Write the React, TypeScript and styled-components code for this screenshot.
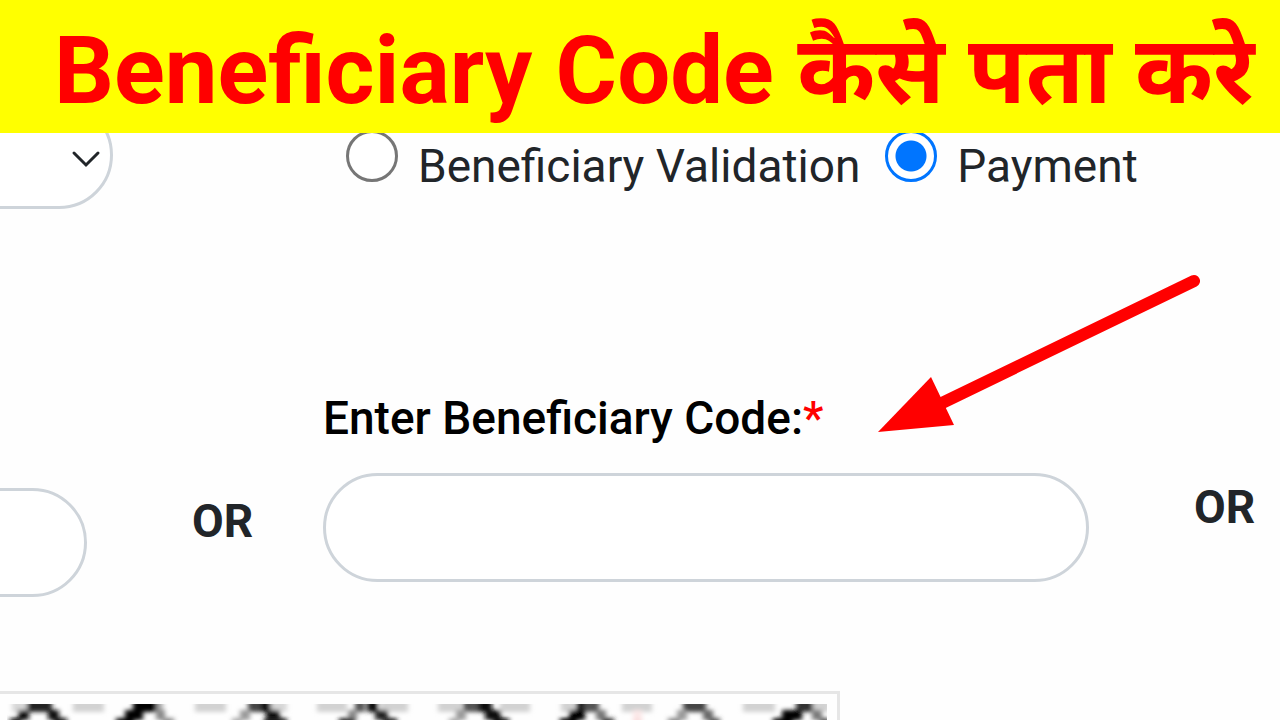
import React from 'react';
import styled, { createGlobalStyle } from 'styled-components';

const GlobalStyle = createGlobalStyle`
  *, *::before, *::after { box-sizing: border-box; }
  body {
    margin: 0;
    background: #fefefe;
    color: #212529;
    font-family: Roboto, "Noto Sans", "Noto Sans Devanagari", sans-serif;
    font-size: 46px;
    line-height: 56px;
  }
`;

const Page = styled.div`
  position: relative;
  display: flex;
  flex-direction: column;
  height: 100vh;
  overflow: hidden;
`;

const Banner = styled.header`
  position: relative;
  z-index: 1;
  flex: none;
  padding: 15px 20px 6px 54px;
  background: #ffff00;
`;

const Title = styled.h1`
  margin: 0;
  color: #ff0000;
  font-size: 94px;
  font-weight: 700;
  line-height: 112px;
  white-space: nowrap;
`;

const Form = styled.form`
  flex: none;
  margin-top: -32px;
`;

const ModeRow = styled.div`
  display: flex;
  align-items: flex-start;
`;

const SelectWrap = styled.div`
  position: relative;
  flex: none;
  width: 193px;
  margin-left: -80px;
`;

const Select = styled.select`
  appearance: none;
  display: block;
  width: 100%;
  height: 108px;
  border: 3px solid #ced4da;
  border-radius: 54px;
  background: #ffffff;
  font: inherit;
`;

const Chevron = styled.svg`
  position: absolute;
  right: 12px;
  top: 49px;
  width: 30px;
  height: 18px;
  pointer-events: none;
`;

const Modes = styled.div`
  display: flex;
  gap: 25px;
  margin: 29px 0 0 233px;
`;

const ModeLabel = styled.label`
  display: flex;
  gap: 20px;
  white-space: nowrap;
  line-height: 72px;
`;

const Radio = styled.input`
  appearance: none;
  flex: none;
  width: 52px;
  height: 52px;
  margin: 0;
  border: 3px solid #767676;
  border-radius: 50%;
  background: #ffffff;
  &:checked {
    border-color: #0075ff;
    background: radial-gradient(circle, #0075ff 15px, #ffffff 16px);
  }
`;

const CodeRow = styled.div`
  display: flex;
  align-items: flex-end;
  margin-top: 181px;
`;

const TextInput = styled.input`
  display: block;
  width: 100%;
  height: 109px;
  padding: 0 40px;
  border: 3px solid #ced4da;
  border-radius: 55px;
  background: #ffffff;
  font: inherit;
`;

const SideField = styled.div`
  flex: none;
  width: 187px;
  margin: 0 105px 0 -100px;
`;

const Or = styled.strong<{ $lift: number }>`
  flex: none;
  width: 60px;
  margin-bottom: ${({ $lift }) => $lift}px;
  font-weight: 700;
`;

const CodeField = styled.div`
  flex: 1;
  margin: 0 105px 15px 71px;
`;

const CodeLabel = styled.label`
  display: block;
  margin-bottom: 27px;
  color: #000000;
  font-weight: 500;
  white-space: nowrap;
`;

const Required = styled.span`
  color: #ff0000;
`;

const EdgeSpace = styled.div`
  flex: none;
  width: 26px;
`;

const Captcha = styled.div`
  width: 860px;
  margin: 94px 0 0 -20px;
  padding: 10px;
  border: 3px solid #e6e6e6;
`;

const CaptchaImage = styled.svg`
  display: block;
  width: 820px;
  height: 60px;
  margin-left: 14px;
`;

const Arrow = styled.svg`
  position: absolute;
  left: 878px;
  top: 274px;
  width: 322px;
  height: 160px;
`;

// Strokes of the captcha by pixel row: [x start, x end, colour]
const captchaRows: [number, number, string][][] = [
  [
    [12, 27, '#d8d8d8'], [27, 52, '#222'], [73, 104, '#d2d2d2'],
    [133, 157, '#050505'], [157, 163, '#aaa'], [195, 226, '#d2d2d2'],
    [248, 261, '#444'], [261, 271, '#111'], [271, 287, '#d8d8d8'],
    [317, 347, '#d2d2d2'], [355, 365, '#555'], [367, 378, '#111'], [380, 408, '#d2d2d2'],
    [438, 462, '#d2d2d2'], [463, 478, '#555'], [478, 492, '#111'], [500, 530, '#d2d2d2'],
    [561, 575, '#d2d2d2'], [576, 585, '#222'], [585, 599, '#555'], [622, 652, '#d2d2d2'],
    [683, 706, '#444'], [743, 775, '#d2d2d2'], [796, 813, '#333'], [813, 830, '#d2d2d2'],
  ],
  [
    [18, 29, '#111'], [48, 59, '#111'], [125, 143, '#050505'], [156, 165, '#888'],
    [240, 250, '#999'], [266, 280, '#111'], [348, 357, '#888'], [375, 388, '#222'],
    [456, 466, '#999'], [485, 501, '#111'], [569, 585, '#050505'], [596, 606, '#777'],
    [633, 642, '#fbe8e8'], [677, 687, '#999'], [703, 713, '#666'],
    [782, 802, '#050505'], [812, 822, '#777'],
  ],
  [
    [10, 21, '#111'], [54, 67, '#111'], [116, 134, '#050505'], [163, 174, '#888'],
    [232, 242, '#aaa'], [264, 287, '#222'], [339, 355, '#222'], [383, 397, '#222'],
    [449, 459, '#aaa'], [493, 509, '#111'], [560, 577, '#050505'], [602, 614, '#333'],
    [633, 642, '#fadede'], [668, 680, '#888'], [709, 720, '#555'],
    [773, 793, '#050505'], [820, 830, '#555'],
  ],
];

export default function App() {
  return (
    <Page>
      <GlobalStyle />
      <Banner>
        <Title>Beneficiary Code कैसे पता करे</Title>
      </Banner>
      <Form>
        <ModeRow>
          <SelectWrap>
            <Select aria-label="Category" />
            <Chevron viewBox="0 0 30 18" aria-hidden="true">
              <path d="M3 3 15 15 27 3" fill="none" stroke="#212529" strokeWidth="3" strokeLinecap="round" strokeLinejoin="miter" />
            </Chevron>
          </SelectWrap>
          <Modes>
            <ModeLabel><Radio type="radio" name="mode" />Beneficiary Validation</ModeLabel>
            <ModeLabel><Radio type="radio" name="mode" defaultChecked />Payment</ModeLabel>
          </Modes>
        </ModeRow>
        <CodeRow>
          <SideField><TextInput type="text" aria-label="Application number" /></SideField>
          <Or $lift={48}>OR</Or>
          <CodeField>
            <CodeLabel htmlFor="code">Enter Beneficiary Code:<Required>*</Required></CodeLabel>
            <TextInput id="code" type="text" />
          </CodeField>
          <Or $lift={62}>OR</Or>
          <EdgeSpace />
        </CodeRow>
        <Captcha>
          <CaptchaImage viewBox="7 0 820 60" role="img" aria-label="Captcha">
            <defs>
              <filter id="soften" x="-5%" y="-50%" width="110%" height="200%">
                <feGaussianBlur stdDeviation="2.5 2" />
              </filter>
            </defs>
            <g filter="url(#soften)">
              {captchaRows.map((row, r) =>
                row.map(([from, to, fill]) => (
                  <rect
                    key={`${r}-${from}`}
                    x={from}
                    y={r === 0 ? -4 : r * 8 - 2}
                    width={to - from}
                    height={r === 0 ? 12 : 10}
                    fill={fill}
                  />
                )),
              )}
            </g>
          </CaptchaImage>
        </Captcha>
      </Form>
      <Arrow viewBox="878 274 322 160" aria-hidden="true">
        <path d="M1194 281 940 404" stroke="#ff0000" strokeWidth="12" strokeLinecap="round" />
        <path d="M878 432 931 377 954 425Z" fill="#ff0000" />
      </Arrow>
    </Page>
  );
}
